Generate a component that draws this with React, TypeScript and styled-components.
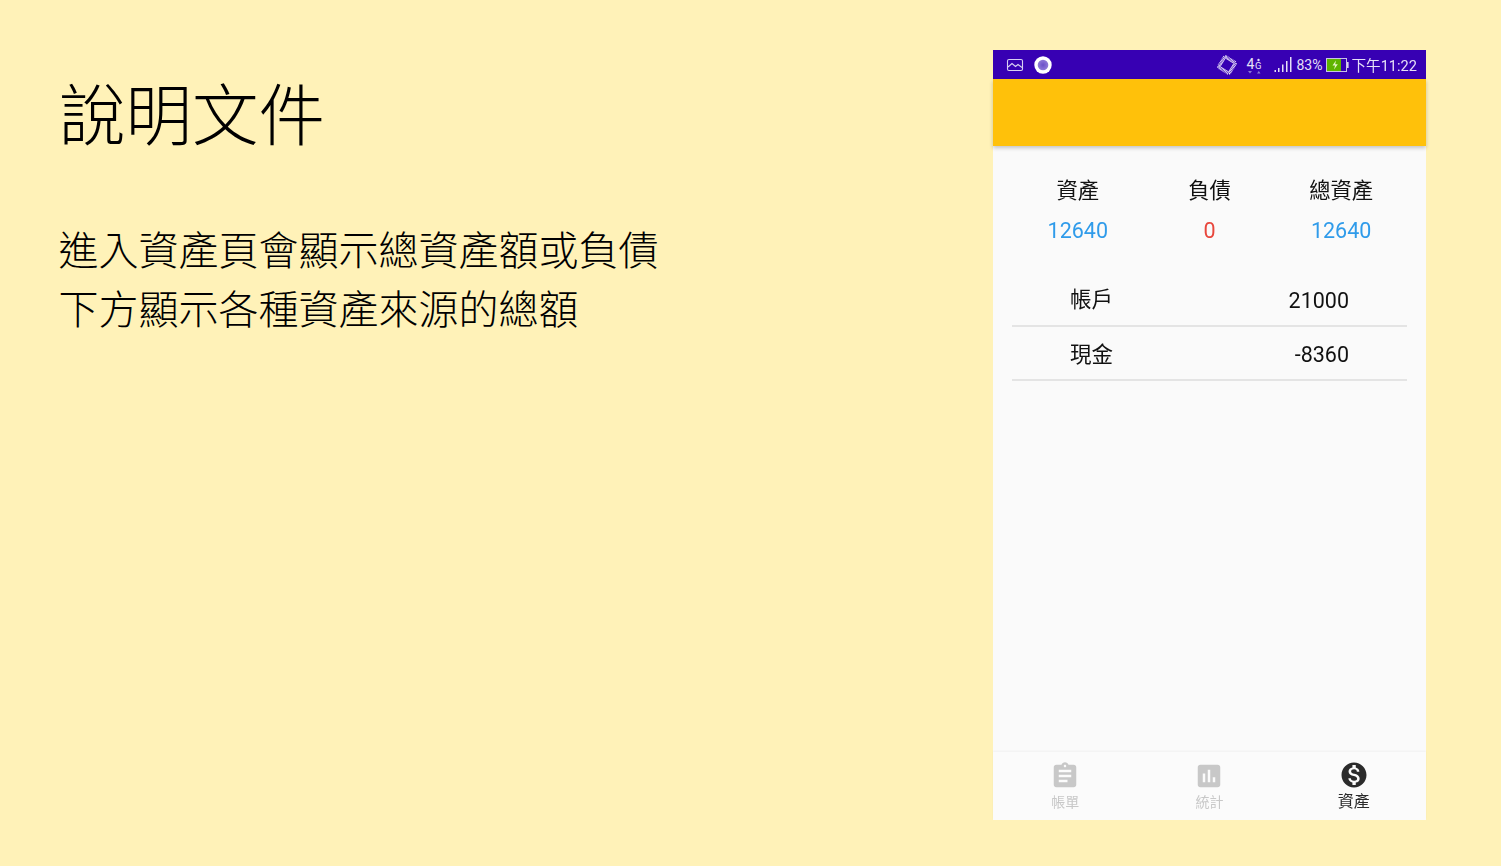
import styled, { createGlobalStyle } from "styled-components";

const CJK = `"Noto Sans CJK TC", "Noto Sans CJK JP", sans-serif`;
const ANDROID = `Roboto, "Noto Sans CJK TC", sans-serif`;

const GlobalStyle = createGlobalStyle`
  html, body {
    margin: 0;
    padding: 0;
    background: #fff2b8;
  }
`;

const stats = [
  { label: "資產", value: "12640", color: "#2f9bea" },
  { label: "負債", value: "0", color: "#e8463c" },
  { label: "總資產", value: "12640", color: "#2f9bea" },
];

const rows = [
  { name: "帳戶", amount: "21000" },
  { name: "現金", amount: "-8360" },
];

const App = () => (
  <Page>
    <GlobalStyle />
    <Notes>
      <Title>說明文件</Title>
      <Body>
        進入資產頁會顯示總資產額或負債
        <br />
        下方顯示各種資產來源的總額
      </Body>
    </Notes>
    <Phone>
      <StatusBar>
        <StatusGroup>
          <svg width="18" height="14" viewBox="0 0 18 14" fill="none" stroke="#d9d0f2" strokeWidth="1.1">
            <rect x="1.5" y="1.5" width="15" height="11" rx="1.5" />
            <path d="M2 9l4-3.5 3.5 3 2.5-2 4 3" />
          </svg>
          <svg width="18" height="18" viewBox="0 0 18 18">
            <defs>
              <radialGradient id="recDot">
                <stop offset="0" stopColor="#6a4fc8" />
                <stop offset="1" stopColor="#8f7ad8" />
              </radialGradient>
            </defs>
            <circle cx="9" cy="9" r="8.7" fill="#fff" />
            <circle cx="9" cy="9" r="5.3" fill="url(#recDot)" />
          </svg>
        </StatusGroup>
        <StatusGroup $tight>
          <svg width="20" height="20" viewBox="0 0 20 20" fill="none" stroke="#efeafb">
            <rect
              x="3.5"
              y="3.5"
              width="13"
              height="13"
              rx="1.5"
              strokeWidth="2.8"
              strokeDasharray="0.8 0.6"
              transform="rotate(32 10 10)"
            />
            <rect x="5" y="5" width="10" height="10" rx="0.5" strokeWidth="0.7" transform="rotate(32 10 10)" />
          </svg>
          <svg width="18" height="18" viewBox="0 0 18 18" fill="#e6e0f7" fontFamily="Roboto, sans-serif">
            <text x="0.5" y="12.5" fontSize="14">4</text>
            <text x="9" y="13" fontSize="9.5">G</text>
            <circle cx="12.5" cy="4" r="1.2" />
            <path d="M2 15h4l-2 2.5zM11 17.5h3.5l-1.7-2.5z" fill="#8d78d6" />
          </svg>
          <svg width="18" height="15" viewBox="0 0 18 15" fill="#e6e0f7">
            <rect x="0.5" y="13" width="1.5" height="2" />
            <rect x="4" y="11" width="1.5" height="4" />
            <rect x="8" y="7.5" width="1.5" height="7.5" />
            <rect x="12" y="4" width="1.5" height="11" />
            <rect x="16" y="0" width="1.5" height="15" />
          </svg>
          <StatusText>83%</StatusText>
          <svg width="23" height="14" viewBox="0 0 23 14">
            <rect x="0.5" y="0.5" width="20" height="13" fill="none" stroke="#c9c2e6" />
            <rect x="1" y="1" width="14" height="12" fill="#5fb400" />
            <rect x="21" y="4" width="1.6" height="6" fill="#d9d0f2" />
            <path d="M10 2.5L6.5 7.6h2.6L8 11.5l3.8-5.2H9.2z" fill="#e8f5c8" />
          </svg>
          <Clock>下午11:22</Clock>
        </StatusGroup>
      </StatusBar>
      <AppBar />
      <Content>
        <StatsRow>
          {stats.map((s) => (
            <Stat key={s.label}>
              <StatLabel>{s.label}</StatLabel>
              <StatValue $color={s.color}>{s.value}</StatValue>
            </Stat>
          ))}
        </StatsRow>
        <AssetList>
          {rows.map((r) => (
            <AssetRow key={r.name}>
              <AssetName>{r.name}</AssetName>
              <span>{r.amount}</span>
            </AssetRow>
          ))}
        </AssetList>
      </Content>
      <BottomNav>
        <NavItem>
          <svg width="30" height="30" viewBox="0 0 24 24" fill="currentColor">
            <path d="M19 3h-4.18C14.4 1.84 13.3 1 12 1c-1.3 0-2.4.84-2.82 2H5c-1.1 0-2 .9-2 2v14c0 1.1.9 2 2 2h14c1.1 0 2-.9 2-2V5c0-1.1-.9-2-2-2zm-7 0c.55 0 1 .45 1 1s-.45 1-1 1-1-.45-1-1 .45-1 1-1zm2 14H7v-2h7v2zm3-4H7v-2h10v2zm0-4H7V7h10v2z" />
          </svg>
          <NavLabel>帳單</NavLabel>
        </NavItem>
        <NavItem>
          <svg width="30" height="30" viewBox="0 0 24 24" fill="currentColor">
            <path d="M19 3H5c-1.1 0-2 .9-2 2v14c0 1.1.9 2 2 2h14c1.1 0 2-.9 2-2V5c0-1.1-.9-2-2-2zM9 17H7v-7h2v7zm4 0h-2V7h2v10zm4 0h-2v-4h2v4z" />
          </svg>
          <NavLabel>統計</NavLabel>
        </NavItem>
        <NavItem $active>
          <svg width="30" height="30" viewBox="0 0 24 24" fill="currentColor">
            <path d="M12 2C6.48 2 2 6.48 2 12s4.48 10 10 10 10-4.48 10-10S17.52 2 12 2zm1.41 16.09V20h-2.67v-1.93c-1.71-.36-3.16-1.46-3.27-3.4h1.96c.1 1.05.82 1.87 2.65 1.87 1.96 0 2.4-.98 2.4-1.59 0-.83-.44-1.61-2.67-2.14-2.48-.6-4.18-1.62-4.18-3.67 0-1.72 1.39-2.84 3.11-3.21V4h2.67v1.95c1.86.45 2.79 1.86 2.85 3.39H14.3c-.05-1.11-.64-1.87-2.22-1.87-1.5 0-2.4.68-2.4 1.64 0 .84.65 1.39 2.67 1.91s4.18 1.39 4.18 3.91c-.01 1.83-1.38 2.83-3.12 3.16z" />
          </svg>
          <NavLabel $active>資產</NavLabel>
        </NavItem>
      </BottomNav>
    </Phone>
  </Page>
);

export default App;

const Page = styled.div`
  width: 1501px;
  height: 866px;
  box-sizing: border-box;
  padding: 50px 75px 46px 59px;
  display: flex;
  justify-content: space-between;
  background: #fff2b8;
  overflow: hidden;
`;

const Notes = styled.div`
  font-family: ${CJK};
  font-weight: 300;
  color: #000;
`;

const Title = styled.h1`
  margin: 14px 0 0;
  font-size: 66.5px;
  line-height: 94px;
  font-weight: 300;
`;

const Body = styled.p`
  margin: 61px 0 0 -0.5px;
  font-size: 40px;
  line-height: 59px;
  font-weight: 300;
`;

const Phone = styled.div`
  width: 433px;
  height: 770px;
  display: flex;
  flex-direction: column;
  background: #fafafa;
  filter: blur(0.35px);
`;

const StatusBar = styled.div`
  height: 29px;
  flex: none;
  box-sizing: border-box;
  padding: 0 9px 0 13px;
  display: flex;
  align-items: center;
  justify-content: space-between;
  background: #3700b3;
  color: #e6e0f7;
`;

const StatusGroup = styled.div<{ $tight?: boolean }>`
  display: flex;
  align-items: center;
  gap: ${({ $tight }) => ($tight ? "4px" : "10px")};

  svg:nth-child(2) {
    margin-left: ${({ $tight }) => ($tight ? "5px" : "0")};
  }
  svg:nth-child(3) {
    margin-left: ${({ $tight }) => ($tight ? "6px" : "0")};
  }
`;

const StatusText = styled.span`
  font-family: ${ANDROID};
  font-size: 14px;
`;

const Clock = styled(StatusText)`
  font-size: 14.6px;
  margin-left: -2px;
`;

const AppBar = styled.div`
  height: 67px;
  flex: none;
  background: #ffc10a;
  box-shadow: 0 2px 4px rgba(0, 0, 0, 0.22);
`;

const Content = styled.div`
  flex: 1;
  box-sizing: border-box;
  padding: 30px 19px 0;
`;

const StatsRow = styled.div`
  display: grid;
  grid-template-columns: repeat(3, 1fr);
`;

const Stat = styled.div`
  display: flex;
  flex-direction: column;
  align-items: center;
  gap: 10px;
`;

const StatLabel = styled.span`
  font-family: ${ANDROID};
  font-size: 21.3px;
  line-height: 30px;
  color: #111;
`;

const StatValue = styled.span<{ $color: string }>`
  font-family: ${ANDROID};
  font-size: 21.5px;
  line-height: 30px;
  color: ${({ $color }) => $color};
`;

const AssetList = styled.div`
  margin-top: 26px;
`;

const AssetRow = styled.div`
  height: 54.5px;
  box-sizing: border-box;
  padding: 4px 58px 0;
  display: flex;
  align-items: center;
  justify-content: space-between;
  border-bottom: 2px solid #e4e4e4;
  font-family: ${ANDROID};
  font-size: 21.5px;
  color: #111;
`;

const AssetName = styled.span`
  margin-bottom: 5px;
`;

const BottomNav = styled.nav`
  height: 68px;
  flex: none;
  display: grid;
  grid-template-columns: repeat(3, 1fr);
  background: #fbfbfb;
  box-shadow: 0 -1px 2px rgba(0, 0, 0, 0.04);
`;

const NavItem = styled.div<{ $active?: boolean }>`
  display: flex;
  flex-direction: column;
  align-items: center;
  padding-top: ${({ $active }) => ($active ? "8px" : "9px")};
  color: ${({ $active }) => ($active ? "#2b2b2b" : "#c8c8c8")};
`;

const NavLabel = styled.span<{ $active?: boolean }>`
  margin-top: ${({ $active }) => ($active ? "2px" : "1px")};
  font-family: ${ANDROID};
  font-size: ${({ $active }) => ($active ? "16px" : "14px")};
  line-height: 20px;
`;
